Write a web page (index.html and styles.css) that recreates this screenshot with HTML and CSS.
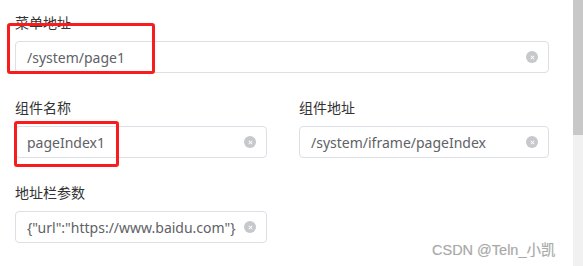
FILE: index.html
```html
<!DOCTYPE html>
<html lang="zh">
<head>
<meta charset="utf-8">
<link rel="stylesheet" href="styles.css">
</head>
<body>
<div class="page">
  <main class="form">
    <div class="item">
      <div class="label">菜单地址</div>
      <div class="input"><span class="value">/system/page1</span><span class="clear"></span></div>
    </div>
    <div class="row">
      <div class="item col">
        <div class="label">组件名称</div>
        <div class="input"><span class="value">pageIndex1</span><span class="clear"></span></div>
      </div>
      <div class="item col">
        <div class="label">组件地址</div>
        <div class="input"><span class="value">/system/iframe/pageIndex</span><span class="clear"></span></div>
      </div>
    </div>
    <div class="row">
      <div class="item col">
        <div class="label">地址栏参数</div>
        <div class="input"><span class="value">{"url":"https://www.baidu.com"}</span><span class="clear"></span></div>
      </div>
      <div class="col"></div>
    </div>
  </main>
  <div class="scrollbar"><div class="thumb"></div></div>
  <div class="mark mark1"></div>
  <div class="mark mark2"></div>
  <div class="watermark">CSDN @Teln_小凯</div>
</div>
</body>
</html>
```
FILE: styles.css
```css
html, body {
  margin: 0;
  padding: 0;
  background: #fff;
}
.page {
  position: relative;
  display: flex;
  width: 583px;
  height: 266px;
  overflow: hidden;
  font-family: "Noto Sans", "Noto Sans CJK SC", sans-serif;
}
.form {
  flex: 1;
  padding: 11px 24px 0 15px;
}
.row {
  display: flex;
  gap: 32px;
}
.col {
  width: 252px;
  flex: none;
}
.row .col:last-child {
  width: 250px;
}
.item {
  margin-bottom: 23px;
}
.label {
  font-family: "Noto Sans CJK SC", sans-serif;
  font-size: 14px;
  line-height: 22px;
  color: #333;
  margin-bottom: 8px;
}
.input {
  box-sizing: border-box;
  height: 32px;
  border: 1px solid #dcdfe6;
  border-radius: 4px;
  display: flex;
  align-items: center;
  padding: 0 10px 0 11px;
  gap: 4px;
}
.value {
  flex: 1;
  min-width: 0;
  overflow: hidden;
  white-space: nowrap;
  font-size: 14px;
  color: #606266;
}
.clear {
  flex: none;
  width: 12px;
  height: 12px;
  border-radius: 50%;
  background: #c6c8cc;
  position: relative;
}
.clear::before, .clear::after {
  content: "";
  position: absolute;
  left: 3.5px;
  top: 5.5px;
  width: 5px;
  height: 1px;
  background: #fff;
  transform: rotate(45deg);
}
.clear::after {
  transform: rotate(-45deg);
}
.scrollbar {
  width: 10px;
  flex: none;
  background: #f1f1f1;
}
.thumb {
  height: 135px;
  background: #c8c8c8;
}
.mark {
  position: absolute;
  box-sizing: border-box;
  border: 3px solid #f81d1d;
  border-radius: 3px;
}
.mark1 {
  left: 7px;
  top: 23px;
  width: 148px;
  height: 51px;
}
.mark2 {
  left: 14px;
  top: 121px;
  width: 105px;
  height: 46px;
}
.watermark {
  position: absolute;
  left: 432px;
  top: 238px;
  font-family: "Liberation Sans", "Noto Sans CJK SC", sans-serif;
  font-size: 14.5px;
  color: #a9a9a9;
  text-shadow: 0 0 1px #ddd;
}
```
